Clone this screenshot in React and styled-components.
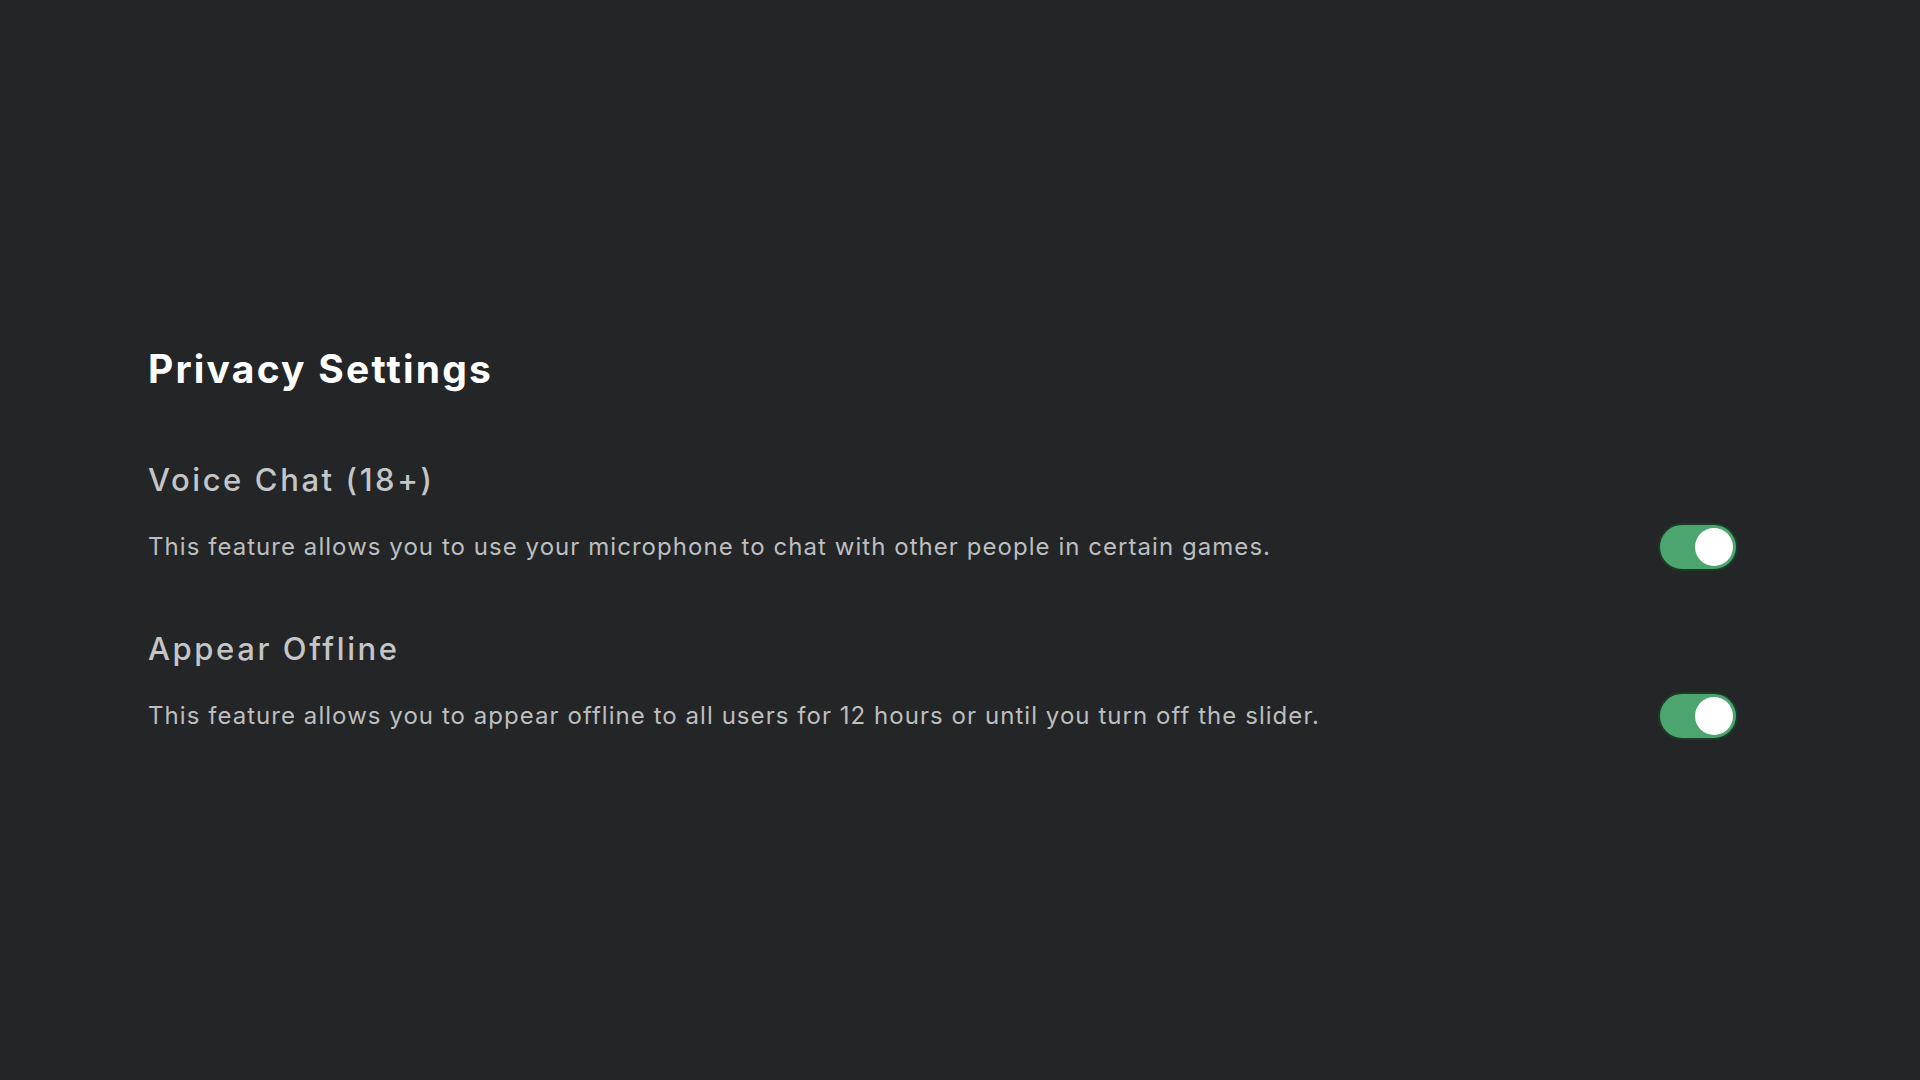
import styled, { createGlobalStyle } from 'styled-components';

const GlobalStyle = createGlobalStyle`
    html, body {
        margin: 0;
        padding: 0;
        background: #232527;
    }
    body {
        font-family: Inter, "Noto Sans", sans-serif;
    }
`;

const Page = styled.div`
    width: 1920px;
    height: 1080px;
    box-sizing: border-box;
    padding: 346px 182px 0 148px;
    background: #232527;
`;

const Title = styled.h1`
    margin: 0 0 70px;
    font-size: 39px;
    line-height: 46px;
    font-weight: 700;
    letter-spacing: 2.2px;
    color: #ffffff;
`;

const Section = styled.section`
    display: flex;
    flex-direction: column;
    gap: 25px;
    & + & {
        margin-top: 60px;
    }
`;

const Heading = styled.h2`
    margin: 0;
    font-size: 31px;
    line-height: 36px;
    font-weight: 500;
    letter-spacing: 2.6px;
    color: #c4c5c6;
`;

const Row = styled.div`
    display: flex;
    align-items: center;
    justify-content: space-between;
`;

const Desc = styled.p`
    margin: 0;
    font-size: 24px;
    line-height: 30px;
    letter-spacing: 1.05px;
    color: #bdbebf;
`;

const Toggle = styled.div`
    width: 80px;
    height: 48px;
    box-sizing: border-box;
    border-radius: 24px;
    border: 2px solid #1c3a27;
    background: ${({on}) => on ? '#4ca46e' : '#55585c'};
    display: flex;
    align-items: center;
    justify-content: ${({on}) => on ? 'flex-end' : 'flex-start'};
    padding: 0 3px;
`;

const Knob = styled.div`
    width: 38px;
    height: 38px;
    border-radius: 50%;
    background: #ffffff;
`;

const settings = [
    {title: 'Voice Chat (18+)', desc: 'This feature allows you to use your microphone to chat with other people in certain games.', on: true},
    {title: 'Appear Offline', desc: 'This feature allows you to appear offline to all users for 12 hours or until you turn off the slider.', on: true},
];

const App = () => {
    return (<>
        <GlobalStyle/>
        <Page>
            <Title>Privacy Settings</Title>
            {settings.map((each, idx) => (
                <Section key={`setting_${idx}`}>
                    <Heading>{each.title}</Heading>
                    <Row>
                        <Desc>{each.desc}</Desc>
                        <Toggle on={each.on}><Knob/></Toggle>
                    </Row>
                </Section>
            ))}
        </Page>
    </>)
}

export default App;
